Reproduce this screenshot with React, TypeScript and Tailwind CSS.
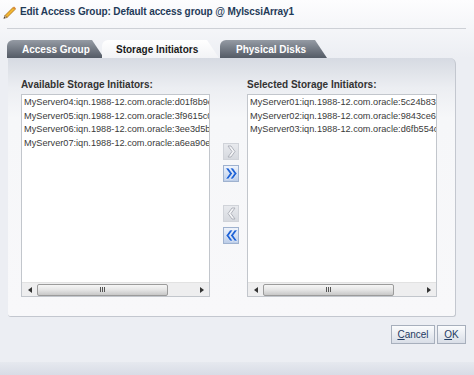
import React from "react";

const leftItems = [
  "MyServer04:iqn.1988-12.com.oracle:d01f8b9c",
  "MyServer05:iqn.1988-12.com.oracle:3f9615c0",
  "MyServer06:iqn.1988-12.com.oracle:3ee3d5b1",
  "MyServer07:iqn.1988-12.com.oracle:a6ea90e2",
];
const rightItems = [
  "MyServer01:iqn.1988-12.com.oracle:5c24b83a",
  "MyServer02:iqn.1988-12.com.oracle:9843ce6b",
  "MyServer03:iqn.1988-12.com.oracle:d6fb554c",
];

function Pencil() {
  return (
    <svg width="13" height="14" viewBox="0 0 13 14">
      <path d="M2 10.5 L10 2.5 L12 4.5 L4 12.5 Z" fill="#f2b630" stroke="#a86b10" strokeWidth="0.8" />
      <path d="M10 2.5 L11 1.5 L13 3.5 L12 4.5 Z" fill="#d9822b" />
      <path d="M2 10.5 L4 12.5 L0.8 13.4 Z" fill="#e8c89a" stroke="#6b4a20" strokeWidth="0.5" />
      <path d="M0.8 13.4 L1.4 11.8 L2.3 12.8 Z" fill="#333" />
    </svg>
  );
}

function ListBox({ items }: { items: string[] }) {
  return (
    <div className="h-[203px] border border-[#c2c6cc] bg-white flex flex-col">
      <div className="flex-1 overflow-hidden pt-[1px] pl-[2px]">
        {items.map((t) => (
          <div key={t} className="h-[13.5px] leading-[13.5px] text-[9.2px] text-[#3a3a3a] whitespace-nowrap">
            {t}
          </div>
        ))}
      </div>
      <div className="h-[14px] bg-[#eeeeef] border-t border-[#e2e2e2] flex items-center">
        <div className="w-[15px] h-full flex items-center justify-center">
          <svg width="4" height="6" viewBox="0 0 4 6"><path d="M4 0 L0 3 L4 6 Z" fill="#333" /></svg>
        </div>
        <div className="w-[131px] h-[12px] rounded-[2px] border border-[#9b9b9b] bg-gradient-to-b from-[#f6f6f6] via-[#e4e4e4] to-[#c8c8c8] flex items-center justify-center">
          <div className="flex gap-[1px]">
            <div className="w-px h-[5px] bg-[#555]" />
            <div className="w-px h-[5px] bg-[#555]" />
            <div className="w-px h-[5px] bg-[#555]" />
          </div>
        </div>
        <div className="flex-1" />
        <div className="w-[15px] h-full flex items-center justify-center">
          <svg width="4" height="6" viewBox="0 0 4 6"><path d="M0 0 L4 3 L0 6 Z" fill="#333" /></svg>
        </div>
      </div>
    </div>
  );
}

function Chevron({ dir, active, double }: { dir: "r" | "l"; active: boolean; double: boolean }) {
  const single = "M2 1 L5 1 L9 6.5 L5 12 L2 12 L6 6.5 Z";
  const flip = dir === "l" ? "translate(13,0) scale(-1,1)" : undefined;
  return (
    <div
      className={
        "w-[16px] h-[17px] flex items-center justify-center " +
        (active
          ? "bg-gradient-to-b from-[#eef3fb] to-[#bccde8] border border-[#9fb2cf]"
          : "bg-gradient-to-b from-[#e8eaee] to-[#d6d9df] border border-[#d0d3d9]")
      }
    >
      <svg width="13" height="13" viewBox="0 0 13 13">
        <g transform={flip}>
          {double ? (
            <>
              <path d="M0.5 1 L3.5 1 L7.5 6.5 L3.5 12 L0.5 12 L4.5 6.5 Z" fill="#1d62d6" stroke="#ffffff" strokeWidth="0.6" />
              <path d="M5 1 L8 1 L12 6.5 L8 12 L5 12 L9 6.5 Z" fill="#1d62d6" stroke="#ffffff" strokeWidth="0.6" />
            </>
          ) : (
            <path d={single} transform="translate(1,0)" fill="#f4f5f7" stroke="#a9adb5" strokeWidth="0.9" />
          )}
        </g>
      </svg>
    </div>
  );
}

export default function App() {
  return (
    <div className="w-[474px] h-[375px] overflow-hidden bg-[#eceef3] flex flex-col font-['Liberation_Sans',Arial,sans-serif]">
      <div className="h-[58px] bg-gradient-to-b from-[#fdfdfe] to-[#eceef3] flex flex-col">
        <div className="h-[22px] flex items-center pl-[3px] gap-[4px] pt-[1px]">
          <Pencil />
          <span className="text-[10px] font-bold text-[#1f3a58] whitespace-nowrap tracking-[-0.1px]">
            Edit Access Group: Default access group @ MyIscsiArray1
          </span>
        </div>
        <div className="h-[6px]" />
        <div className="mx-[7px] h-px bg-[#cdd0d6] mr-[8px]" />
        <div className="h-[11px]" />
        <div className="h-[18px] flex pl-[7px] text-[10px] font-bold">
          <div className="w-[97px] rounded-tl-[6px] [clip-path:polygon(0_0,calc(100%-12px)_0,100%_100%,0_100%)] bg-gradient-to-b from-[#959ba4] to-[#545b66] text-white flex items-center pl-[15px] pt-[1px]">
            Access Group
          </div>
          <div className="-ml-[2px] w-[117px] rounded-tl-[6px] [clip-path:polygon(0_0,calc(100%-12px)_0,100%_100%,0_100%)] bg-gradient-to-b from-white to-[#f2f3f6] text-[#1a1a1a] flex items-center pl-[14px] pt-[1px]">
            Storage Initiators
          </div>
          <div className="ml-[1px] w-[107px] rounded-tl-[6px] [clip-path:polygon(0_0,calc(100%-12px)_0,100%_100%,0_100%)] bg-gradient-to-b from-[#959ba4] to-[#545b66] text-white flex items-center pl-[16px] pt-[1px]">
            Physical Disks
          </div>
        </div>
      </div>

      <div className="ml-[8px] w-[448px] h-[259px] rounded-tr-[6px] rounded-b-[3px] bg-[linear-gradient(to_bottom,#d6dae2_0px,#eceef2_30px,#f6f7f9_60px,#f8f8fa_100%)] border-r border-b border-[#c3c7cf] flex pt-[21px] pl-[13px]">
        <div className="w-[189px] flex flex-col">
          <div className="h-[12px] leading-[12px] text-[10px] font-bold text-[#333] mb-[3px] whitespace-nowrap">
            Available Storage Initiators:
          </div>
          <ListBox items={leftItems} />
        </div>
        <div className="w-[37px] flex flex-col pl-[13px] pt-[64px]">
          <Chevron dir="r" active={false} double={false} />
          <div className="h-[5px]" />
          <Chevron dir="r" active={true} double={true} />
          <div className="h-[23px]" />
          <Chevron dir="l" active={false} double={false} />
          <div className="h-[5px]" />
          <Chevron dir="l" active={true} double={true} />
        </div>
        <div className="w-[190px] flex flex-col">
          <div className="h-[12px] leading-[12px] text-[10px] font-bold text-[#333] mb-[3px] whitespace-nowrap">
            Selected Storage Initiators:
          </div>
          <ListBox items={rightItems} />
        </div>
      </div>

      <div className="flex justify-end gap-[2px] pr-[8px] mt-[8px]">
        <div className="w-[44px] h-[19px] border border-[#a7afbc] bg-gradient-to-b from-[#fbfcfd] to-[#d9dee7] text-[10px] text-[#1f3b63] flex items-center justify-center">
          <span><span className="underline">C</span>ancel</span>
        </div>
        <div className="w-[29px] h-[19px] border border-[#a7afbc] bg-gradient-to-b from-[#fbfcfd] to-[#d9dee7] text-[10px] text-[#1f3b63] flex items-center justify-center">
          <span><span className="underline">O</span>K</span>
        </div>
      </div>
      <div className="flex-1" />
      <div className="h-[13px] bg-gradient-to-b from-[#e6e9ef] to-[#d8dce6]" />
    </div>
  );
}
